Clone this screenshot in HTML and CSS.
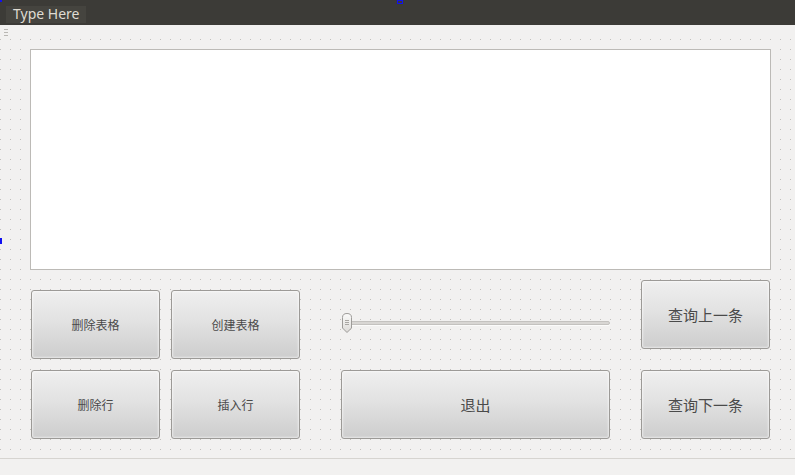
FILE: index.html
```html
<!DOCTYPE html>
<html lang="zh">
<head>
<meta charset="utf-8">
<title>Form</title>
<link rel="stylesheet" href="styles.css">
</head>
<body>
<div class="window">
  <div class="menubar">
    <div class="menu-item">Type Here</div>
  </div>
  <div class="toolbar"><span class="handle"></span></div>
  <div class="central">
    <div class="table"></div>
    <div class="controls">
      <button class="btn small r1 c1">删除表格</button>
      <button class="btn small r1 c3">创建表格</button>
      <div class="slider r1 c5">
        <div class="track"></div>
        <svg class="knob" width="12" height="21" viewBox="0 0 12 21">
          <defs>
            <linearGradient id="kg" x1="0" y1="0" x2="0" y2="1">
              <stop offset="0" stop-color="#fbfbfa"/>
              <stop offset="1" stop-color="#dcdad7"/>
            </linearGradient>
          </defs>
          <path d="M1.5 4.5 Q1.5 0.5 6 0.5 Q10.5 0.5 10.5 4.5 L10.5 15 L6 19.5 L1.5 15 Z" fill="url(#kg)" stroke="#9d9b98" stroke-width="1"/>
          <path d="M4 7.5 H8 M4 9.5 H8 M4 11.5 H8" stroke="#a9a7a3" stroke-width="1"/>
        </svg>
      </div>
      <button class="btn big r1 c7 top">查询上一条</button>
      <button class="btn small r2 c1">删除行</button>
      <button class="btn small r2 c3">插入行</button>
      <button class="btn big r2 c5">退出</button>
      <button class="btn big r2 c7">查询下一条</button>
    </div>
  </div>
  <div class="statusbar"></div>
  <span class="mark mark-a"></span>
  <span class="mark mark-b"></span>
  <span class="mark mark-c"></span>
</div>
</body>
</html>
```
FILE: styles.css
```css
html, body {
  margin: 0;
  padding: 0;
  background: #f2f1f0;
}
.window {
  position: relative;
  width: 795px;
  height: 475px;
  overflow: hidden;
  background: #f2f1f0;
  font-family: "Noto Sans", "Noto Sans CJK SC", sans-serif;
}
.menubar {
  height: 25px;
  background: #3c3b37;
  display: flex;
  align-items: flex-start;
  padding: 6px 0 0 6px;
  box-sizing: border-box;
}
.menu-item {
  height: 17px;
  line-height: 16px;
  padding: 0 7px;
  background: #45443f;
  color: #dfdbd2;
  font-size: 14px;
}
.toolbar {
  height: 12px;
  box-sizing: border-box;
  padding: 4px 0 0 4px;
}
.handle {
  display: block;
  width: 4px;
  height: 7px;
  background: linear-gradient(#b9b7b3 1px, transparent 1px) 0 0 / 4px 3px repeat-y;
}
.central {
  height: 422px;
  box-sizing: border-box;
  border-bottom: 1px solid #d6d4d0;
  padding: 12px 0 0 30px;
  background-color: #f2f1f0;
  background-image: conic-gradient(at 1px 1px, transparent 270deg, #c3c1bd 270deg);
  background-size: 10px 10px;
  background-position: 0 2px;
}
.table {
  width: 741px;
  height: 221px;
  box-sizing: border-box;
  background: #ffffff;
  border: 1px solid #bcbab6;
}
.controls {
  margin: 10px 0 0 1px;
  display: grid;
  grid-template-columns: 129px 11px 129px 41px 269px 31px 129px;
  grid-template-rows: 79px 69px;
  row-gap: 11px;
}
.r1 { grid-row: 1; }
.r2 { grid-row: 2; }
.c1 { grid-column: 1; }
.c3 { grid-column: 3; }
.c5 { grid-column: 5; }
.c7 { grid-column: 7; }
.btn {
  height: 69px;
  margin: 0;
  padding: 0;
  box-sizing: border-box;
  border: 1px solid #9c9a97;
  border-radius: 3px;
  background: linear-gradient(#efefef 0%, #e2e2e2 45%, #cdcdcd 100%);
  box-shadow: inset 0 0 2px 1px rgba(255, 255, 255, 0.55);
  color: #4a4a4a;
  font-family: "Noto Sans CJK SC", sans-serif;
  align-self: end;
}
.btn.small { font-size: 12px; }
.btn.big { font-size: 15px; }
.btn.top { align-self: start; }
.slider {
  position: relative;
  align-self: start;
  margin-top: 33px;
  height: 21px;
}
.track {
  position: absolute;
  left: 1px;
  right: 0;
  top: 8px;
  height: 4px;
  box-sizing: border-box;
  border: 1px solid #c4c2bf;
  border-radius: 2px;
  background: #d8d6d3;
  box-shadow: 0 1px 0 #fbfbfa;
}
.knob {
  position: absolute;
  left: 0;
  top: 0;
}
.statusbar {
  height: 16px;
}
.mark {
  position: absolute;
  box-sizing: border-box;
  border: 1px solid #1010f0;
  background: #3c3b37;
}
.mark-a { left: 0; top: 0; width: 2px; height: 2px; background: #1010f0; }
.mark-b { left: 397px; top: 0; width: 6px; height: 4px; }
.mark-c { left: 0; top: 238px; width: 2px; height: 6px; }
```
